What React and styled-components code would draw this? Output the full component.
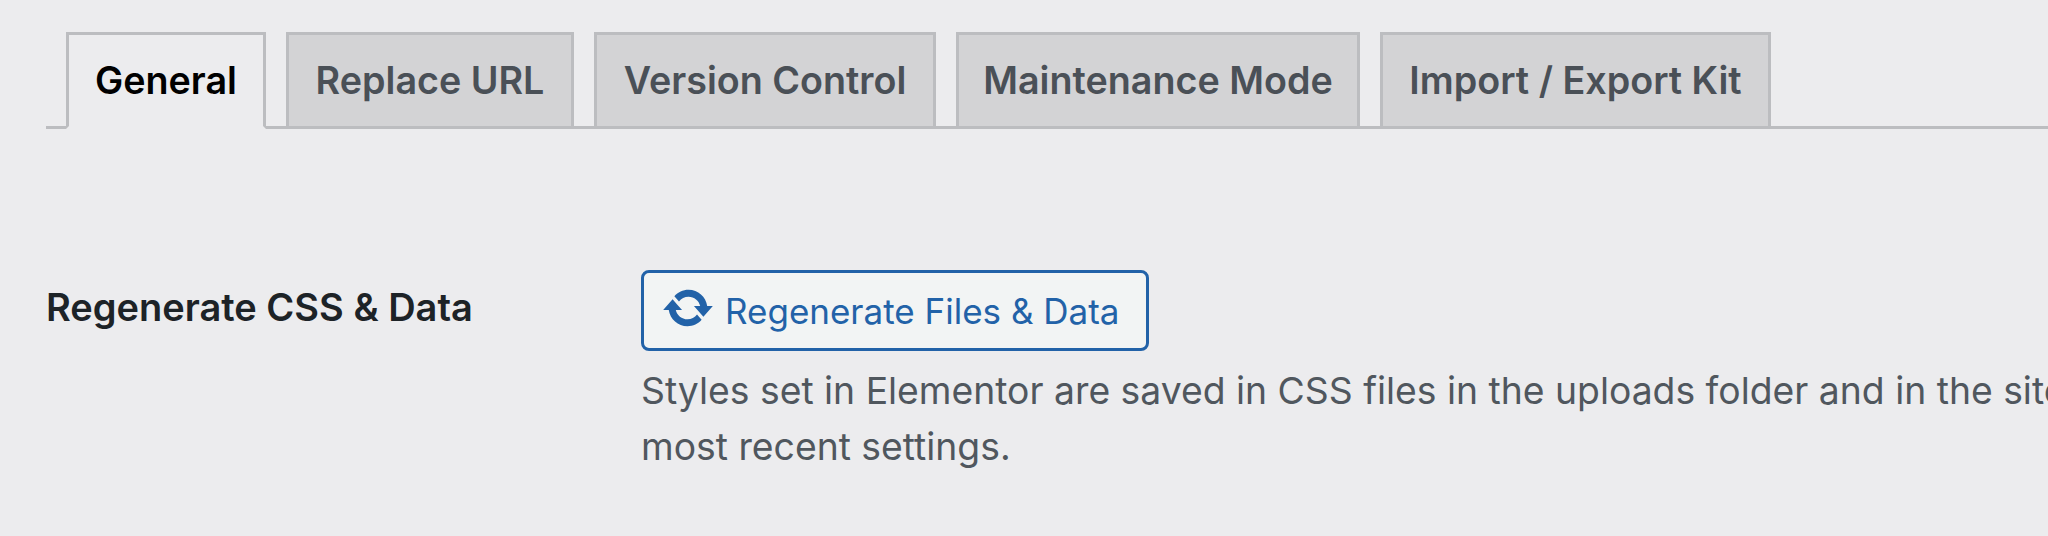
import React from 'react';
import styled, {createGlobalStyle} from 'styled-components';

const GlobalStyle = createGlobalStyle`
  html, body {
    margin: 0;
    padding: 0;
    background: #ececee;
    overflow: hidden;
  }
`;

const Page = styled.div`
  width: 2048px;
  height: 536px;
  overflow: hidden;
  padding: 32px 0 0 46px;
  box-sizing: border-box;
  font-family: Inter, "Liberation Sans", sans-serif;
  -webkit-font-smoothing: antialiased;
`;

const TabBar = styled.nav`
  display: flex;
  height: 94px;
  padding-left: 20px;
  gap: 20px;
  border-bottom: 3px solid #bcbdc0;
`;

const Tab = styled.a`
  height: 97px;
  box-sizing: border-box;
  display: flex;
  align-items: center;
  justify-content: center;
  width: ${(p) => p.$width}px;
  padding-bottom: 1px;
  border: 3px solid #bcbdc0;
  border-bottom-color: ${(p) => (p.$active ? '#ececee' : '#bcbdc0')};
  background: ${(p) => (p.$active ? '#ececee' : '#d3d3d5')};
  color: ${(p) => (p.$active ? '#000' : '#4a5057')};
  font-size: 37.7px;
  font-weight: 600;
  white-space: nowrap;
`;

const SettingRow = styled.section`
  display: grid;
  grid-template-columns: 595px 1fr;
  margin-top: 141px;
`;

const SettingLabel = styled.div`
  font-size: 38px;
  font-weight: 600;
  line-height: 44px;
  margin-top: 15px;
  color: #1d2327;
  white-space: nowrap;
`;

const SettingBody = styled.div`
  min-width: 0;
`;

const RegenerateButton = styled.button`
  display: flex;
  align-items: center;
  width: 508px;
  height: 81px;
  box-sizing: border-box;
  margin: 0;
  padding: 0 0 0 17px;
  background: #f2f4f4;
  border: 3px solid #2262a8;
  border-radius: 8px;
  color: #2262a8;
  font-family: inherit;
  font-size: 35px;
  font-weight: 400;
  white-space: nowrap;
`;

const ButtonIcon = styled.svg`
  width: 54px;
  height: 54px;
  margin: -6px 10px 0 0;
  flex: none;
  fill: currentColor;
`;

const Description = styled.p`
  margin: 12px 0 0;
  font-size: 37.3px;
  line-height: 56px;
  color: #50575e;
  white-space: nowrap;
`;

const TABS = [
  {label: 'General', width: 200, active: true},
  {label: 'Replace URL', width: 288},
  {label: 'Version Control', width: 342},
  {label: 'Maintenance Mode', width: 404},
  {label: 'Import / Export Kit', width: 391},
];

export default function App() {
  return (
    <Page>
      <GlobalStyle />
      <TabBar>
        {TABS.map((tab) => (
          <Tab key={tab.label} $active={tab.active} $width={tab.width}>{tab.label}</Tab>
        ))}
      </TabBar>
      <SettingRow>
        <SettingLabel>Regenerate CSS &amp; Data</SettingLabel>
        <SettingBody>
          <RegenerateButton>
            <ButtonIcon viewBox="0 0 20 20">
              <path d="M10.2 3.28c3.53 0 6.43 2.61 6.92 6h2.08l-3.5 4-3.5-4h2.32c-.45-1.97-2.21-3.45-4.32-3.45-1.45 0-2.73.71-3.54 1.78L4.95 5.66C6.23 4.2 8.11 3.28 10.2 3.28zm-.4 13.44c-3.52 0-6.43-2.61-6.92-6H.8l3.5-4c1.17 1.33 2.33 2.67 3.5 4H5.48c.45 1.97 2.21 3.45 4.32 3.45 1.45 0 2.73-.71 3.54-1.78l1.71 1.95c-1.28 1.46-3.15 2.38-5.25 2.38z" />
            </ButtonIcon>
            Regenerate Files &amp; Data
          </RegenerateButton>
          <Description>
            Styles set in Elementor are saved in CSS files in the uploads folder and in the site’s database. Recreate those files, according to the<br />
            most recent settings.
          </Description>
        </SettingBody>
      </SettingRow>
    </Page>
  );
}
